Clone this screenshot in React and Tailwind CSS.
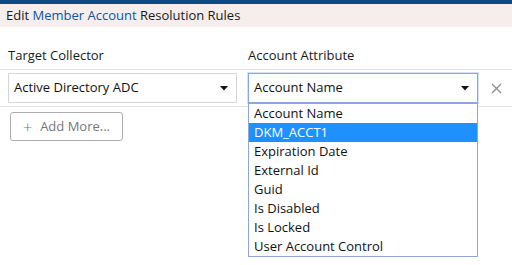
import React from "react";

const options = [
  "Account Name",
  "DKM_ACCT1",
  "Expiration Date",
  "External Id",
  "Guid",
  "Is Disabled",
  "Is Locked",
  "User Account Control",
];

function Caret() {
  return (
    <svg width="8" height="5" viewBox="0 0 8 5" className="shrink-0">
      <path d="M0 0 L8 0 L4 4.5 Z" fill="#111" />
    </svg>
  );
}

function Select({ value, focused }) {
  return (
    <div
      className={
        "h-[30px] flex items-center justify-between pl-[5px] pr-[8px] border bg-white " +
        (focused ? "border-[#86a9e6] shadow-[0_0_0_1px_rgba(134,169,230,0.35)]" : "border-[#d6d6d6]")
      }
    >
      <span className="text-[13px] text-[#111]">{value}</span>
      <Caret />
    </div>
  );
}

export default function App() {
  return (
    <div
      className="relative w-[512px] h-[265px] bg-white text-[#1a1a1a] overflow-hidden"
      style={{ fontFamily: '"Open Sans", "Noto Sans", sans-serif' }}
    >
      <div className="h-[4px] bg-[#0b4a86]" />
      <div className="h-[23px] bg-[#f6eded] px-[6px] text-[13px] leading-[23px]">
        Edit <span className="text-[#115595]">Member Account</span> Resolution Rules
      </div>

      <div className="grid grid-cols-[229px_230px_1fr] gap-x-[11px] px-[8px] pt-[19px] h-[42px] text-[13px] leading-[18px]">
        <div>Target Collector</div>
        <div>Account Attribute</div>
        <div />
      </div>

      <div className="border-t border-b border-[#e2e2e2] py-[3px] px-[8px] grid grid-cols-[229px_230px_1fr] gap-x-[11px]">
        <Select value="Active Directory ADC" />
        <div className="relative">
          <Select value="Account Name" focused />
          <div className="absolute left-0 top-[30px] w-[230px] z-10 bg-white border border-[#8ca6d8]">
            {options.map((o, i) => (
              <div
                key={o}
                className={
                  "h-[19px] leading-[19px] px-[5px] text-[13px] " +
                  (i === 1 ? "bg-[#1e90ff] text-white" : "text-[#111]")
                }
              >
                {o}
              </div>
            ))}
          </div>
        </div>
        <div className="flex items-center justify-center">
          <svg width="11" height="11" viewBox="0 0 11 11">
            <path d="M1 1 L10 10 M10 1 L1 10" stroke="#8a8a8a" strokeWidth="1.2" />
          </svg>
        </div>
      </div>

      <div className="pt-[5px] pl-[10px]">
        <button className="w-[113px] h-[29px] flex items-center justify-center gap-[8px] border border-[#adadad] rounded-[3px] bg-white text-[13px] text-[#777]">
          <span className="text-[16px] leading-none font-light">+</span>
          <span>Add More...</span>
        </button>
      </div>
    </div>
  );
}
